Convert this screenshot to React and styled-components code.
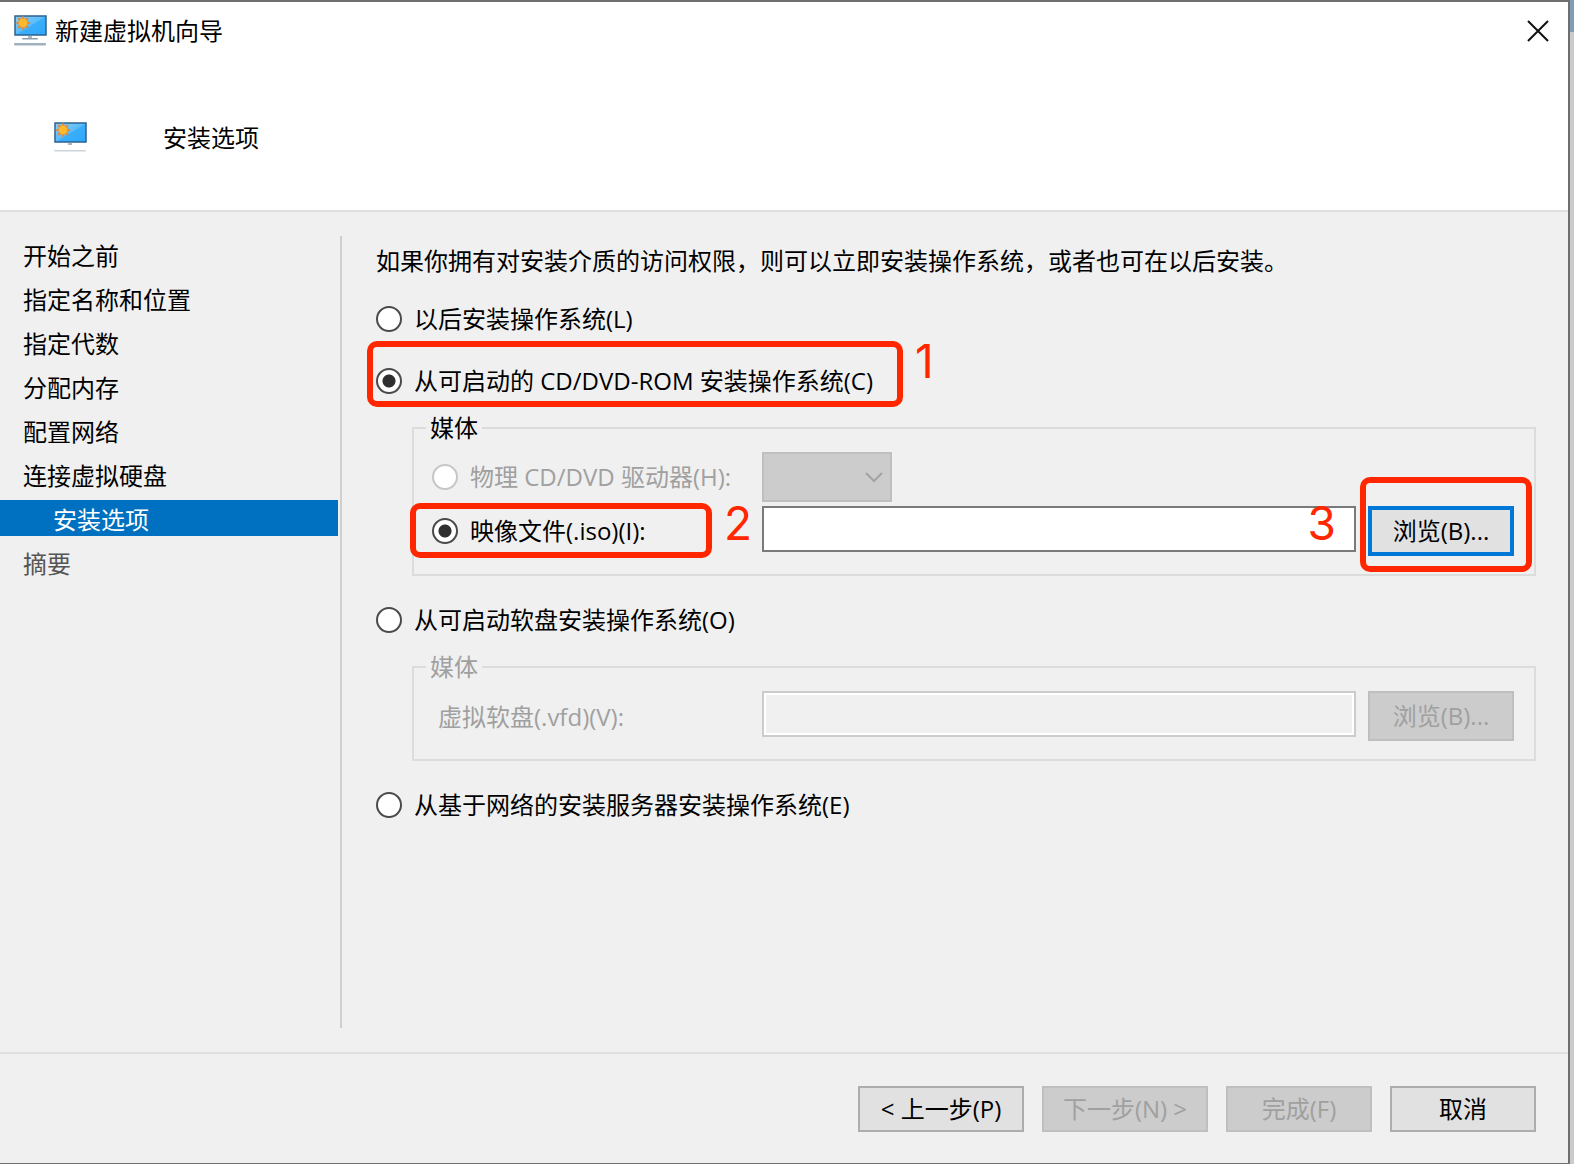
import React, { useState } from 'react'
import styled, { createGlobalStyle } from 'styled-components'

const steps = [
  { title: '开始之前' },
  { title: '指定名称和位置' },
  { title: '指定代数' },
  { title: '分配内存' },
  { title: '配置网络' },
  { title: '连接虚拟硬盘' },
  { title: '安装选项', state: 'current' },
  { title: '摘要', state: 'pending' },
]

const rays = [0, 45, 90, 135, 180, 225, 270, 315]

const MonitorIcon = ({ stand }) => (
  <svg width="34" height="32" viewBox="0 0 34 32" aria-hidden="true">
    <defs>
      <linearGradient id="screen" x1="0" y1="0" x2="1" y2="1">
        <stop offset="0" stopColor="#8ad0fa" />
        <stop offset="0.5" stopColor="#5abcfb" />
        <stop offset="0.52" stopColor="#3aaefb" />
        <stop offset="1" stopColor="#2ea8fc" />
      </linearGradient>
    </defs>
    <rect x="2" y="1" width="31" height="19" fill="url(#screen)" stroke="#2d618f" strokeWidth="1.5" />
    {rays.map((angle) => (
      <path key={angle} d="M8 4.5 L10 0 L12 4.5 Z" fill="#dd8a3c" transform={`rotate(${angle} 10 8)`} />
    ))}
    <circle cx="10" cy="8" r="4.4" fill="#fdb92c" />
    <rect x="15" y="21" width="4" height="2" fill="#a9b9c6" />
    {stand && <rect x="9" y="23" width="16" height="1.6" rx="0.8" fill="#8c9dab" />}
    <rect x="1" y="28" width="32" height={stand ? 2.6 : 1.6} rx="1" fill={stand ? '#9fb0bf' : '#ccd5dc'} />
  </svg>
)

const Option = ({ id, group, value, selected, onSelect, disabled, children }) => (
  <OptionLine>
    <Radio
      type="radio"
      id={id}
      name={group}
      checked={selected === value}
      disabled={disabled}
      onChange={() => onSelect(value)}
    />
    <Label htmlFor={id} $disabled={disabled}>{children}</Label>
  </OptionLine>
)

const App = () => {

  const [source, setSource] = useState('cd')
  const [media, setMedia] = useState('iso')

  return (
    <>
      <GlobalStyle />
      <Desktop>
        <Wizard>
          <TitleBar>
            <MonitorIcon stand />
            <WindowTitle>新建虚拟机向导</WindowTitle>
            <CloseButton type="button" aria-label="关闭">
              <svg width="22" height="22" viewBox="0 0 22 22">
                <path d="M1 1 L21 21 M21 1 L1 21" stroke="#111" strokeWidth="2" fill="none" />
              </svg>
            </CloseButton>
          </TitleBar>

          <Header>
            <MonitorIcon />
            <Heading>安装选项</Heading>
          </Header>

          <Body>
            <Steps>
              {steps.map((step) => (
                <Step key={step.title} $state={step.state}>{step.title}</Step>
              ))}
            </Steps>

            <Content>
              <Intro>如果你拥有对安装介质的访问权限，则可以立即安装操作系统，或者也可在以后安装。</Intro>

              <Option id="later" group="source" value="later" selected={source} onSelect={setSource}>
                以后安装操作系统(L)
              </Option>
              <DiscOption>
                <Option id="cd" group="source" value="cd" selected={source} onSelect={setSource}>
                  从可启动的 CD/DVD-ROM 安装操作系统(C)
                </Option>
                <DiscMark><MarkNumber>1</MarkNumber></DiscMark>
              </DiscOption>

              <MediaGroup $rows="50px 50px">
                <Legend>媒体</Legend>
                <Option id="drive" group="media" value="drive" selected={media} onSelect={setMedia} disabled>
                  物理 CD/DVD 驱动器(H):
                </Option>
                <DriveBox>
                  <DriveSelect disabled aria-label="物理 CD/DVD 驱动器" />
                  <svg width="18" height="11" viewBox="0 0 18 11">
                    <path d="M1 1 L9 9 L17 1" stroke="#a3a3a3" strokeWidth="2" fill="none" />
                  </svg>
                </DriveBox>
                <ImageOption>
                  <Option id="iso" group="media" value="iso" selected={media} onSelect={setMedia}>
                    映像文件(.iso)(I):
                  </Option>
                  <ImageMark><MarkNumber>2</MarkNumber></ImageMark>
                </ImageOption>
                <PathInput type="text" aria-label="映像文件(.iso)" />
                <BrowseCell>
                  <Button type="button" $browse $focused>浏览(B)...</Button>
                  <BrowseMark><MarkNumber $before>3</MarkNumber></BrowseMark>
                </BrowseCell>
              </MediaGroup>

              <Option id="floppy" group="source" value="floppy" selected={source} onSelect={setSource}>
                从可启动软盘安装操作系统(O)
              </Option>

              <MediaGroup $rows="50px">
                <Legend $disabled>媒体</Legend>
                <FloppyLabel htmlFor="vfd" $disabled>虚拟软盘(.vfd)(V):</FloppyLabel>
                <PathInput id="vfd" type="text" disabled />
                <Button type="button" $browse disabled>浏览(B)...</Button>
              </MediaGroup>

              <Option id="network" group="source" value="network" selected={source} onSelect={setSource}>
                从基于网络的安装服务器安装操作系统(E)
              </Option>
            </Content>
          </Body>

          <Footer>
            <Button type="button" $wide>&lt; 上一步(P)</Button>
            <Button type="button" $wide disabled>下一步(N) &gt;</Button>
            <Button type="button" disabled>完成(F)</Button>
            <Button type="button">取消</Button>
          </Footer>
        </Wizard>
      </Desktop>
    </>
  )
}

export default App


const GlobalStyle = createGlobalStyle`
  * {
    box-sizing: border-box;
  }
  body {
    margin: 0;
    font-family: "Open Sans", "Noto Sans CJK SC", sans-serif;
    font-size: 24px;
    line-height: 32px;
    color: black;
  }
  input, select, button {
    font: inherit;
    color: inherit;
    margin: 0;
  }
`;

/* a sliver of the desktop stays visible to the right of the wizard */
const Desktop = styled.div`
  min-height: 100vh;
  display: flex;
  padding: 0 4px 0 0;
  background: linear-gradient(#7f9db5 32px, #cbcbcb 32px);
`;

const Wizard = styled.div`
  flex: 1;
  display: flex;
  flex-direction: column;
  background-color: #f0f0f0;
  border: solid #6f6f6f;
  border-width: 2px 2px 1px 0;
`;

const TitleBar = styled.div`
  display: flex;
  align-items: center;
  height: 58px;
  padding: 0 15px 0 13px;
  gap: 8px;
  background-color: white;
`;

const WindowTitle = styled.div`
  flex: 1;
`;

const CloseButton = styled.button`
  display: flex;
  align-items: center;
  justify-content: center;
  width: 30px;
  height: 30px;
  padding: 0;
  border: none;
  background: none;
`;

const Header = styled.div`
  display: flex;
  align-items: center;
  gap: 76px;
  height: 152px;
  padding: 6px 53px 0;
  background-color: white;
  border-bottom: 2px solid #dfdfdf;
`;

const Heading = styled.h1`
  margin: 0;
  font-size: 24px;
  font-weight: 400;
`;

const Body = styled.div`
  flex: 1;
  display: flex;
  padding: 24px 32px 24px 0;
`;

const Steps = styled.ul`
  width: 342px;
  flex-shrink: 0;
  display: flex;
  flex-direction: column;
  gap: 8px;
  margin: 0;
  padding: 0 2px 0 0;
  list-style: none;
  border-right: 2px solid #cfcfcf;
`;

const Step = styled.li`
  height: 36px;
  padding: 4px 0 0 ${({ $state }) => ($state === 'current' ? '53px' : '23px')};
  color: ${({ $state }) => ($state === 'current' ? 'white' : $state === 'pending' ? '#555' : 'black')};
  background-color: ${({ $state }) => ($state === 'current' ? '#0070c0' : 'transparent')};
`;

const Content = styled.div`
  flex: 1;
  min-width: 0;
  padding: 9px 0 0 34px;
`;

const Intro = styled.p`
  margin: 0 0 26px;
`;

const DiscOption = styled.div`
  position: relative;
  width: 478px;
  margin-top: 30px;
`;

const OptionLine = styled.div`
  display: flex;
  align-items: center;
  gap: 12px;
  width: max-content;
`;

const Radio = styled.input`
  appearance: none;
  flex-shrink: 0;
  width: 26px;
  height: 26px;
  border: 2px solid #4a4a4a;
  border-radius: 50%;
  background-color: white;
  &:checked{
    background-image: radial-gradient(circle, #2f2f2f 6px, transparent 7px);
  }
  &:disabled{
    border-color: #c6c6c6;
  }
`;

const Label = styled.label`
  white-space: nowrap;
  color: ${({ $disabled }) => ($disabled ? '#a0a0a0' : 'inherit')};
`;

const MediaGroup = styled.fieldset`
  position: relative;
  display: grid;
  grid-template-columns: 318px 1fr 146px;
  grid-template-rows: ${({ $rows }) => $rows};
  column-gap: 12px;
  row-gap: 4px;
  margin: 15px 0 28px 36px;
  padding: 8px 20px 18px 18px;
  min-width: 0;
  border: 2px solid #dcdcdc;
`;

const Legend = styled.legend`
  margin-left: -6px;
  padding: 0 4px;
  color: ${({ $disabled }) => ($disabled ? '#a0a0a0' : 'inherit')};
`;

const DriveBox = styled.div`
  position: relative;
  grid-column: 2 / 4;
  width: 130px;
  height: 50px;
  svg{
    position: absolute;
    right: 9px;
    top: 20px;
    pointer-events: none;
  }
`;

const DriveSelect = styled.select`
  appearance: none;
  width: 100%;
  height: 100%;
  border: 2px solid #bfbfbf;
  border-radius: 0;
  background-color: #ccc;
  opacity: 1;
`;

const ImageOption = styled.div`
  position: relative;
  display: flex;
  align-items: center;
`;

const PathInput = styled.input`
  width: 100%;
  height: 46px;
  padding: 0 8px;
  border: 2px solid #7a7a7a;
  border-radius: 0;
  background-color: white;
  &:disabled{
    border-color: #ccc;
    background-color: #f0f0f0;
    box-shadow: inset 0 0 0 2px white;
  }
`;

const BrowseCell = styled.div`
  position: relative;
`;

const FloppyLabel = styled(Label)`
  padding: 10px 0 0 6px;
`;

const Button = styled.button`
  width: ${({ $wide }) => ($wide ? '166px' : '146px')};
  height: ${({ $browse }) => ($browse ? '50px' : '46px')};
  padding: 0;
  border: ${({ $focused }) => ($focused ? '4px solid #0078d7' : '2px solid #adadad')};
  border-radius: 0;
  background-color: #e1e1e1;
  white-space: nowrap;
  &:disabled{
    border-color: #bfbfbf;
    background-color: #ccc;
    color: #a0a0a0;
  }
`;

const Footer = styled.div`
  display: flex;
  justify-content: flex-end;
  gap: 18px;
  padding: 32px 32px 31px;
  border-top: 2px solid #dfdfdf;
`;

/* red call-outs drawn over the controls */
const Mark = styled.span`
  position: absolute;
  border: 6px solid #ff2600;
  border-radius: 10px;
  pointer-events: none;
`;

const DiscMark = styled(Mark)`
  inset: -24px -49px -10px -9px;
`;

const ImageMark = styled(Mark)`
  inset: -3px 38px -2px -22px;
`;

const BrowseMark = styled(Mark)`
  inset: -29px -18px -16px -8px;
`;

const MarkNumber = styled.span`
  position: absolute;
  ${({ $before }) => ($before ? 'top: 16px; right: calc(100% + 30px);' : 'top: -10px; left: calc(100% + 18px);')}
  font-family: Inter, sans-serif;
  font-size: 46px;
  line-height: 48px;
  color: #ff2600;
`;
